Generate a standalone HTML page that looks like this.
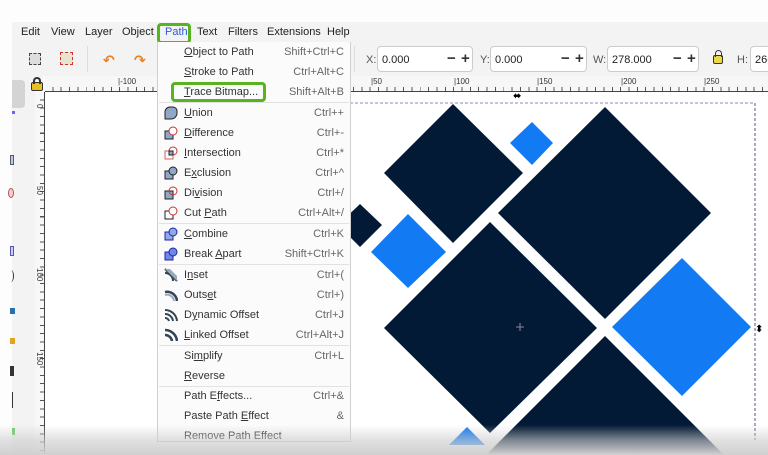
<!DOCTYPE html>
<html><head><meta charset="utf-8"><style>
*{margin:0;padding:0;box-sizing:border-box}
body{width:768px;height:455px;overflow:hidden;background:#fdfdfd;position:relative;font-family:"Liberation Sans","DejaVu Sans",sans-serif;font-size:11px;color:#222}
.abs{position:absolute}
.menubar{left:12px;top:22px;width:756px;height:20px;background:#f3f3f3}
.menubar span{position:absolute;top:4px;font-size:11px}
.toolbar{left:12px;top:42px;width:756px;height:34px;background:#f3f3f3}
.hr{left:45px;top:76px;width:723px;height:16px;background:#f7f7f7;border-bottom:1px solid #444;
 background-image:repeating-linear-gradient(90deg,transparent 0 7.35px,#555 7.35px 8.35px);background-size:100% 5px;background-repeat:no-repeat;background-position:0 11px}
.vr{left:35px;top:92px;width:10px;height:363px;background:#f7f7f7;border-right:1px solid #444;
 background-image:repeating-linear-gradient(180deg,transparent 0 7.35px,#555 7.35px 8.35px);background-size:5px 100%;background-repeat:no-repeat;background-position:5px 0}
.lt{left:12px;top:76px;width:23px;height:379px;background:#f3f3f3}
.rl{position:absolute;font-size:8px;color:#333}
.inp{position:absolute;top:46px;height:26px;background:#fff;border:1px solid #ccc;border-radius:4px;font-size:11px;padding:7px 4px}
.inp b{position:absolute;top:3px;font-weight:bold;font-size:15px;color:#333}
.lbl{position:absolute;top:54px;color:#555;font-size:11px}
.menu{left:157px;top:42px;width:194px;height:400px;background:#fbfbfb;border:1px solid #cfcfcf;border-top:none}
.it{position:absolute;left:0;width:192px;height:20px}
.it .t{position:absolute;left:26px;top:4px;color:#333}
.it .k{position:absolute;right:6px;top:4px;color:#666}
.sep{position:absolute;left:1px;width:190px;height:1px;background:#e2e2e2}
.ic{position:absolute;left:6px;top:3px;width:14px;height:14px}
.green{position:absolute;border:3px solid #58b320;border-radius:4px}
</style></head><body>
<div class="abs menubar">
<span style="left:9px">Edit</span><span style="left:39px">View</span><span style="left:73px">Layer</span><span style="left:110px">Object</span><span style="left:153px;color:#2a5bd7">Path</span><span style="left:185px">Text</span><span style="left:216px">Filters</span><span style="left:255px">Extensions</span><span style="left:315px">Help</span>
</div>
<div class="green" style="left:157px;top:23px;width:34px;height:21px"></div>
<div class="abs toolbar"></div>
<div class="abs" style="left:29px;top:53px;width:12px;height:12px;border:1px dashed #444;background:#ddd"></div>
<div class="abs" style="left:60px;top:52px;width:13px;height:13px;border:1px dashed #c33;background:#e9e4d0"></div>
<div class="abs" style="left:87px;top:46px;width:1px;height:26px;background:#ddd"></div>
<div class="abs" style="left:103px;top:52px;color:#e8811f;font-size:14px;font-weight:bold">&#8630;</div>
<div class="abs" style="left:134px;top:52px;color:#e8811f;font-size:14px;font-weight:bold">&#8631;</div>
<div class="abs" style="left:354px;top:46px;width:1px;height:26px;background:#ddd"></div>
<span class="lbl" style="left:366px">X:</span>
<div class="inp" style="left:377px;width:96px">0.000<b style="left:69px">−</b><b style="left:83px">+</b></div>
<span class="lbl" style="left:480px">Y:</span>
<div class="inp" style="left:490px;width:97px">0.000<b style="left:70px">−</b><b style="left:84px">+</b></div>
<span class="lbl" style="left:593px">W:</span>
<div class="inp" style="left:607px;width:92px">278.000<b style="left:65px">−</b><b style="left:79px">+</b></div>
<div class="abs" style="left:713px;top:55px;width:10px;height:9px;background:#e8d84a;border:1px solid #333;border-radius:2px"></div>
<div class="abs" style="left:715px;top:50px;width:7px;height:7px;border:1.5px solid #333;border-bottom:none;border-radius:4px 4px 0 0"></div>
<span class="lbl" style="left:737px">H:</span>
<div class="inp" style="left:750px;width:30px">266</div>
<div class="abs lt"></div>
<div class="abs" style="left:12px;top:80px;width:13px;height:28px;background:#d4d4d4;border-radius:0 4px 4px 0"></div>
<div class="abs" style="left:12px;top:111px;width:3px;height:3px;background:#66f"></div>
<div class="abs" style="left:10px;top:155px;width:4px;height:10px;border:1px solid #557;background:#bcd"></div>
<div class="abs" style="left:8px;top:188px;width:6px;height:10px;border:1px solid #a55;border-radius:50%;background:#fcc"></div>
<div class="abs" style="left:10px;top:246px;width:4px;height:10px;border:1px solid #55a;background:#ccf"></div>
<div class="abs" style="left:8px;top:270px;width:6px;height:12px;border-right:1px solid #333;border-radius:50%"></div>
<div class="abs" style="left:10px;top:308px;width:5px;height:6px;background:#2a6fb0"></div>
<div class="abs" style="left:10px;top:338px;width:5px;height:6px;background:#e8a020"></div>
<div class="abs" style="left:10px;top:366px;width:4px;height:10px;background:#333"></div>
<div class="abs" style="left:12px;top:392px;width:1px;height:16px;background:#333"></div>
<div class="abs" style="left:12px;top:428px;width:3px;height:7px;background:#6c6"></div>
<div class="abs hr"></div>
<div class="abs vr"></div>
<div class="abs" style="left:31px;top:76px;width:12px;height:14px;background:#f3f3f3"></div>
<div class="abs" style="left:31px;top:82px;width:12px;height:9px;background:#e8c020;border:1px solid #333;border-radius:2px"></div>
<div class="abs" style="left:33px;top:77px;width:8px;height:7px;border:2px solid #333;border-bottom:none;border-radius:4px 4px 0 0"></div>
<span class="rl" style="left:118px;top:77px">|-100</span>
<span class="rl" style="left:371px;top:77px">|50</span>
<span class="rl" style="left:454px;top:77px">|100</span>
<span class="rl" style="left:537px;top:77px">|150</span>
<span class="rl" style="left:621px;top:77px">|200</span>
<span class="rl" style="left:704px;top:77px">|250</span>
<span class="rl" style="left:35px;top:104px;writing-mode:vertical-rl">0</span>
<span class="rl" style="left:35px;top:186px;writing-mode:vertical-rl">50</span>
<span class="rl" style="left:35px;top:268px;writing-mode:vertical-rl">100</span>
<span class="rl" style="left:35px;top:352px;writing-mode:vertical-rl">150</span>
<div class="abs" style="left:45px;top:93px;width:723px;height:362px;background:#fff"></div>
<svg class="abs" style="left:0;top:0" width="768" height="455">
<line x1="350" y1="103" x2="755" y2="103" stroke="#8888bb" stroke-dasharray="3,2"/>
<line x1="755" y1="103" x2="755" y2="440" stroke="#555577" stroke-dasharray="3,2"/>
<g fill="#031a36">
<polygon points="453,104 523,173 453,243 384,173"/>
<polygon points="605,107 711,213 605,319 498,213"/>
<polygon points="360,204 382,225 360,247 338,225"/>
<polygon points="490,222 597,328 490,433 384,328"/>
<polygon points="605,336 725,456 485,456"/>
</g>
<g fill="#127af2">
<polygon points="532,122 553,143 532,165 510,143"/>
<polygon points="408,214 446,252 408,288 371,252"/>
<polygon points="682,258 751,327 682,396 612,327"/>
<polygon points="467,427 485,445 449,445"/>
</g>
<path d="M516 327h8M520 323v8" stroke="#889" stroke-width="1"/>
<text x="513" y="99" font-size="10" font-weight="bold">⬌</text>
<text x="755" y="332" font-size="10" font-weight="bold">⬍</text>
</svg>
<div class="abs menu">
<div class="it" style="top:0"><span class="t"><u>O</u>bject to Path</span><span class="k">Shift+Ctrl+C</span></div>
<div class="it" style="top:20px"><span class="t"><u>S</u>troke to Path</span><span class="k">Ctrl+Alt+C</span></div>
<div class="it" style="top:40px"><span class="t"><u>T</u>race Bitmap...</span><span class="k">Shift+Alt+B</span></div>
<div class="sep" style="top:60px"></div>
<div class="it" style="top:61px"><svg class="ic"><path d="M1 13V6a5 5 0 0 1 5-5h3a4 4 0 0 1 4 4v2a6 6 0 0 1-6 6z" fill="#8fa8c8" stroke="#222"/></svg><span class="t"><u>U</u>nion</span><span class="k">Ctrl++</span></div>
<div class="it" style="top:81px"><svg class="ic"><rect x="1" y="5" width="8" height="8" fill="#8fa8c8" stroke="#222"/><circle cx="9" cy="5" r="4" fill="#fff" stroke="#c33"/></svg><span class="t"><u>D</u>ifference</span><span class="k">Ctrl+-</span></div>
<div class="it" style="top:101px"><svg class="ic"><rect x="1" y="5" width="8" height="8" fill="none" stroke="#c66"/><circle cx="9" cy="5" r="4" fill="none" stroke="#c33"/><rect x="5" y="5" width="4" height="4" fill="#8fa8c8" stroke="#222"/></svg><span class="t"><u>I</u>ntersection</span><span class="k">Ctrl+*</span></div>
<div class="it" style="top:121px"><svg class="ic"><rect x="1" y="5" width="8" height="8" fill="#8fa8c8" stroke="#222"/><circle cx="9" cy="5" r="4" fill="#8fa8c8" stroke="#222"/></svg><span class="t">E<u>x</u>clusion</span><span class="k">Ctrl+^</span></div>
<div class="it" style="top:141px"><svg class="ic"><rect x="1" y="5" width="8" height="8" fill="#8fa8c8" stroke="#222"/><circle cx="9" cy="5" r="4" fill="none" stroke="#c33"/></svg><span class="t">Di<u>v</u>ision</span><span class="k">Ctrl+/</span></div>
<div class="it" style="top:161px"><svg class="ic"><rect x="1" y="5" width="8" height="8" fill="none" stroke="#222"/><circle cx="9" cy="5" r="4" fill="#fff" stroke="#c33"/></svg><span class="t">Cut <u>P</u>ath</span><span class="k">Ctrl+Alt+/</span></div>
<div class="sep" style="top:181px"></div>
<div class="it" style="top:182px"><svg class="ic"><rect x="1" y="5" width="8" height="8" fill="#8fa8e8" stroke="#22a"/><circle cx="9" cy="5" r="4" fill="#8fa8e8" stroke="#22a"/></svg><span class="t"><u>C</u>ombine</span><span class="k">Ctrl+K</span></div>
<div class="it" style="top:202px"><svg class="ic"><rect x="1" y="5" width="8" height="8" fill="#6f88e8" stroke="#22a"/><circle cx="9" cy="5" r="4" fill="#6f88e8" stroke="#22a"/></svg><span class="t">Break <u>A</u>part</span><span class="k">Shift+Ctrl+K</span></div>
<div class="sep" style="top:222px"></div>
<div class="it" style="top:223px"><svg class="ic"><path d="M1 1l12 12M1 5a8 8 0 0 1 8 8" stroke="#345" stroke-width="2" fill="none"/><path d="M1 1h5l7 7v5z" fill="#9ab"/></svg><span class="t">I<u>n</u>set</span><span class="k">Ctrl+(</span></div>
<div class="it" style="top:243px"><svg class="ic"><path d="M1 4a10 10 0 0 1 12 9" stroke="#345" stroke-width="2.5" fill="none"/><path d="M1 7a7 7 0 0 1 9 6" stroke="#9ab" stroke-width="2" fill="none"/></svg><span class="t">Outs<u>e</u>t</span><span class="k">Ctrl+)</span></div>
<div class="it" style="top:263px"><svg class="ic"><path d="M1 2a12 12 0 0 1 12 11M1 6a8 8 0 0 1 8 7M1 10a4 4 0 0 1 4 3" stroke="#345" stroke-width="2" fill="none"/></svg><span class="t">D<u>y</u>namic Offset</span><span class="k">Ctrl+J</span></div>
<div class="it" style="top:283px"><svg class="ic"><path d="M1 2a12 12 0 0 1 12 11M1 7a7 7 0 0 1 7 6" stroke="#345" stroke-width="2.5" fill="none"/></svg><span class="t"><u>L</u>inked Offset</span><span class="k">Ctrl+Alt+J</span></div>
<div class="sep" style="top:303px"></div>
<div class="it" style="top:304px"><span class="t">Si<u>m</u>plify</span><span class="k">Ctrl+L</span></div>
<div class="it" style="top:324px"><span class="t"><u>R</u>everse</span></div>
<div class="sep" style="top:344px"></div>
<div class="it" style="top:344px"><span class="t">Path E<u>f</u>fects...</span><span class="k">Ctrl+&amp;</span></div>
<div class="it" style="top:364px"><span class="t">Paste Path <u>E</u>ffect</span><span class="k">&amp;</span></div>
<div class="it" style="top:384px"><span class="t">Remove Path Effect</span></div>
</div>
<div class="green" style="left:171px;top:82px;width:95px;height:20px"></div>
<div class="abs" style="left:0;top:425px;width:768px;height:30px;background:linear-gradient(180deg,rgba(205,205,205,0) 0%,rgba(205,205,205,.6) 50%,#d0d0d0 100%)"></div>
</body></html>
